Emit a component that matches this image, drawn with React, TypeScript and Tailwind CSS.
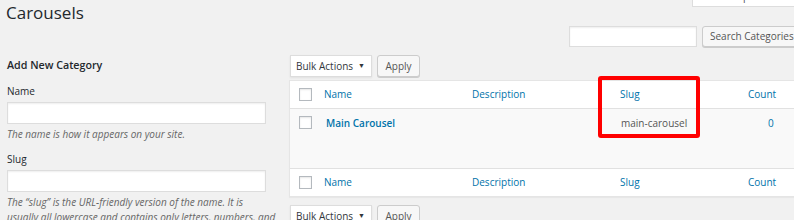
import React from "react";

const font = { fontFamily: '"Open Sans", "Noto Sans", sans-serif' };

function Checkbox() {
  return <span className="block h-[13px] w-[13px] border border-[#b4b9be] bg-white shadow-[inset_0_1px_2px_rgba(0,0,0,0.1)]" />;
}

function BulkBar() {
  return (
    <div className="flex h-[22px] items-stretch gap-[5px] pl-[1px]">
      <div className="flex w-[82px] items-center justify-between border border-[#ddd] bg-white pl-[5px] pr-[6px] text-[10px] text-[#32373c] shadow-[0_1px_2px_rgba(0,0,0,0.07)]">
        <span>Bulk Actions</span>
        <span className="text-[7px]">▼</span>
      </div>
      <button className="w-[43px] rounded-[3px] border border-[#ccc] bg-[#f7f7f7] text-[10px] text-[#555] shadow-[0_1px_0_#ccc]">
        Apply
      </button>
    </div>
  );
}

function HeadRow({ top }: { top?: boolean }) {
  return (
    <div
      className={
        "grid h-[28px] grid-cols-[27px_148px_148px_128px_80px] items-center bg-white text-[10px] text-[#0073aa] " +
        (top ? "border-b border-[#e1e1e1]" : "border-t border-[#e1e1e1]")
      }
    >
      <div className="pl-[9px]">
        <Checkbox />
      </div>
      <div className="pl-[7px]">Name</div>
      <div className="pl-[7px]">Description</div>
      <div className="pl-[7px]">Slug</div>
      <div className="pl-[7px]">Count</div>
    </div>
  );
}

export default function App() {
  return (
    <div className="relative h-[220px] w-[794px] overflow-hidden bg-[#f1f1f1] text-[#23282d]" style={font}>
      {/* screen options tab, mostly scrolled off */}
      <div className="absolute left-[692px] top-[-16px] flex h-[23px] w-[110px] items-end border border-[#ddd] bg-white pb-[5px] pl-[8px] text-[10px] leading-none text-[#555]">
        Screen Options
      </div>

      <div className="h-[26px] pl-[6px] pt-[1px] text-[17px] leading-[24px]">Carousels</div>

      <div className="flex h-[21px] justify-end gap-[5px] -mr-[12px]">
        <div className="w-[128px] border border-[#ddd] bg-white shadow-[inset_0_1px_2px_rgba(0,0,0,0.07)]" />
        <button className="w-[104px] rounded-[3px] border border-[#ccc] bg-[#f7f7f7] pl-[7px] text-left text-[10px] text-[#555] shadow-[0_1px_0_#ccc]">
          Search Categories
        </button>
      </div>

      <div className="mt-[8px] flex">
        <div className="w-[289px] shrink-0 pl-[7px] pr-[4px]">
          <div className="pt-[3px] text-[10.7px] font-semibold leading-[14px]">Add New Category</div>
          <div className="mt-[12px] text-[10px] leading-[14px]">Name</div>
          <div className="mt-[4px] h-[22px] w-[259px] border border-[#ddd] bg-white shadow-[inset_0_1px_2px_rgba(0,0,0,0.07)]" />
          <div className="mt-[3px] text-[10px] italic leading-[15px] text-[#666]">The name is how it appears on your site.</div>
          <div className="mt-[10px] text-[10px] leading-[14px]">Slug</div>
          <div className="mt-[4px] h-[22px] w-[259px] border border-[#ddd] bg-white shadow-[inset_0_1px_2px_rgba(0,0,0,0.07)]" />
          <div className="mt-[3px] text-[10px] italic leading-[15px] text-[#666]">
            The “slug” is the URL-friendly version of the name. It is
            <br />
            usually all lowercase and contains only letters, numbers, and hyphens.
          </div>
        </div>

        <div className="flex-1">
          <BulkBar />
          <div className="mt-[3px] w-[540px] border border-[#e5e5e5] shadow-[0_1px_1px_rgba(0,0,0,0.04)]">
            <HeadRow top />
            <div className="grid h-[59px] grid-cols-[27px_148px_148px_128px_80px] items-start bg-[#f9f9f9] pt-[7px] text-[10px]">
              <div className="pl-[9px]">
                <Checkbox />
              </div>
              <div className="pl-[9px] font-semibold leading-[14px] text-[#0073aa]">Main Carousel</div>
              <div />
              <div className="pl-[8px] leading-[14px] text-[#555]">main-carousel</div>
              <div className="pl-[27px] leading-[14px] text-[#0073aa]">0</div>
            </div>
            <HeadRow />
          </div>
          <div className="mt-[8px]">
            <BulkBar />
          </div>
        </div>
      </div>

      {/* highlight around the slug column */}
      <div className="absolute left-[598px] top-[76px] h-[62px] w-[102px] rounded-[3px] border-[4px] border-[#ff0000]" />
    </div>
  );
}
